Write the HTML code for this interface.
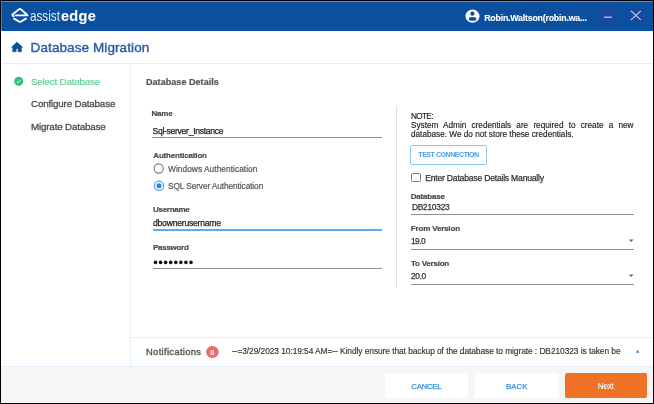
<!DOCTYPE html>
<html><head><meta charset="utf-8"><style>
html,body{margin:0;padding:0;}
body{width:654px;height:404px;position:relative;overflow:hidden;background:#000;font-family:'Liberation Sans', sans-serif;}
#root{position:absolute;left:0;top:0;width:654px;height:404px;filter:blur(0.35px);}
#win{position:absolute;left:1px;top:1px;width:652px;height:402px;background:#fff;}
.t{position:absolute;white-space:pre;font-family:'Liberation Sans', sans-serif;}
</style></head><body>
<div id="root"><div id="win"></div>
<div style="position:absolute;left:1px;top:1px;width:652px;height:30px;background:#0b4f9f"></div>
<div style="position:absolute;left:1px;top:1px;width:652px;height:1px;background:rgba(255,255,255,0.35)"></div>
<div style="position:absolute;left:1px;top:1px;width:1px;height:30px;background:rgba(255,255,255,0.25)"></div>
<div style="position:absolute;left:599.5px;top:9px;width:15.5px;height:13.5px;background:#1b479f;border-radius:1.5px"></div>
<div style="position:absolute;left:629px;top:8.7px;width:15.3px;height:13.8px;background:#1b479f;border-radius:1.5px"></div>
<div style="position:absolute;left:2px;top:63px;width:651px;height:1px;background:#e3eefa"></div>
<div style="position:absolute;left:130px;top:63px;width:1px;height:304px;background:#e3eefa"></div>
<div style="position:absolute;left:131px;top:337px;width:522px;height:1px;background:#e3eefa"></div>
<div style="position:absolute;left:1px;top:366px;width:652px;height:1px;background:#e3eefa"></div>
<div style="position:absolute;left:1px;top:367px;width:652px;height:35px;background:#f6f6f6"></div>
<div style="position:absolute;left:385px;top:373px;width:83px;height:25px;background:#fff;border-radius:2px"></div>
<div style="position:absolute;left:475px;top:373px;width:83px;height:25px;background:#fff;border-radius:2px"></div>
<div style="position:absolute;left:565px;top:373px;width:82px;height:25px;background:#f07226;border-radius:2px"></div>
<div style="position:absolute;left:152px;top:137px;width:230px;height:1px;background:#8f8f8f"></div>
<div style="position:absolute;left:153px;top:229px;width:229px;height:2px;background:#5caaf0"></div>
<div style="position:absolute;left:153px;top:268px;width:229px;height:1px;background:#8f8f8f"></div>
<div style="position:absolute;left:410.5px;top:214px;width:223.5px;height:1px;background:#8f8f8f"></div>
<div style="position:absolute;left:410.5px;top:249px;width:223.5px;height:1px;background:#8f8f8f"></div>
<div style="position:absolute;left:410.5px;top:284px;width:223.5px;height:1px;background:#8f8f8f"></div>
<div style="position:absolute;left:396px;top:106px;width:1px;height:181px;background:#e0e0e0"></div>
<div style="position:absolute;left:410px;top:144.5px;width:77px;height:20px;box-sizing:border-box;border:1.2px solid #8cc4f4;border-radius:2px"></div>
<div style="position:absolute;left:411px;top:173px;width:10px;height:9px;box-sizing:border-box;border:1.2px solid #777;border-radius:1.5px"></div>
<svg width="654" height="404" style="position:absolute;left:0;top:0">
<g fill="none" stroke="#fff" stroke-width="1.85" stroke-linecap="round" stroke-linejoin="round">
<path d="M13.6 16.3 L12.5 15.3 Q12.1 14.9 12.5 14.5 L18.8 9.4 Q19.9 8.6 21 9.4 L27.5 15.3 H15.9"/>
<path d="M14 18.6 L19.3 21.7 Q20 22.1 20.7 21.7 L26 18.6"/>
</g>
<ellipse cx="472.5" cy="16.2" rx="7" ry="6.6" fill="#fff"/>
<circle cx="472.4" cy="13.7" r="2.1" fill="#0b4f9f"/>
<ellipse cx="472.6" cy="18.9" rx="3.8" ry="1.9" fill="#0b4f9f"/>
<rect x="603.8" y="16.5" width="8" height="1.3" fill="#b8c6e6"/>
<path d="M631 10.8 L640.8 19.9 M640.8 10.8 L631 19.9" stroke="#c0cce8" stroke-width="1.15"/>
<path d="M17 42.2 L11.6 47.2 H12.8 V51.7 H16.1 V48.6 H18.1 V51.7 H21.3 V47.2 H22.5 Z" fill="#0d4fa3" stroke="#0d4fa3" stroke-width="0.7" stroke-linejoin="round"/>
<circle cx="18.7" cy="81.3" r="4.5" fill="#2ec27e"/>
<path d="M16.9 81.6 L18.2 82.7 L20.5 80.3" stroke="#fff" stroke-width="0.9" fill="none"/>
<circle cx="158.7" cy="168.5" r="4.6" fill="none" stroke="#7a7a7a" stroke-width="1.1"/>
<circle cx="159" cy="185.8" r="4.6" fill="none" stroke="#5aa8f2" stroke-width="1.3"/>
<circle cx="159" cy="185.8" r="2.5" fill="#1f88e8"/>
<path d="M628.8 239.6 H633.6 L631.2 242 Z" fill="#666"/>
<path d="M628.8 274.5 H633.6 L631.2 276.9 Z" fill="#666"/>
<ellipse cx="212.4" cy="352.1" rx="6.4" ry="6.0" fill="#ec6c6c"/>
<path d="M635.9 352.7 L637.6 349.7 L639.3 352.7 Z" fill="#3f7fd0"/>
<circle cx="155.50" cy="262.4" r="1.8" fill="#111"/>
<circle cx="160.57" cy="262.4" r="1.8" fill="#111"/>
<circle cx="165.64" cy="262.4" r="1.8" fill="#111"/>
<circle cx="170.71" cy="262.4" r="1.8" fill="#111"/>
<circle cx="175.78" cy="262.4" r="1.8" fill="#111"/>
<circle cx="180.85" cy="262.4" r="1.8" fill="#111"/>
<circle cx="185.92" cy="262.4" r="1.8" fill="#111"/>
<circle cx="190.99" cy="262.4" r="1.8" fill="#111"/>
</svg>
<span class="t" style="left:30.20px;top:7.50px;font-size:15px;line-height:15px;font-weight:400;color:#e4ecf7;letter-spacing:0.000px;transform:scaleX(0.7795);transform-origin:0px 0;">assist</span>
<span class="t" style="left:60.90px;top:8.50px;font-size:14.5px;line-height:14.5px;font-weight:700;color:#ffffff;letter-spacing:0.333px;-webkit-text-stroke:0.1px currentColor;">edge</span>
<span class="t" style="left:484.20px;top:13.60px;font-size:8.8px;line-height:8.8px;font-weight:700;color:#ffffff;letter-spacing:-0.208px;-webkit-text-stroke:0.1px currentColor;">Robin.Waltson(robin.wa...</span>
<span class="t" style="left:30.60px;top:41.00px;font-size:13.5px;line-height:13.5px;font-weight:400;color:#2a5ca6;letter-spacing:0.094px;-webkit-text-stroke:0.4px currentColor;">Database Migration</span>
<span class="t" style="left:31.00px;top:77.00px;font-size:9.8px;line-height:9.8px;font-weight:400;color:#5ccf9a;letter-spacing:-0.200px;-webkit-text-stroke:0.15px currentColor;">Select Database</span>
<span class="t" style="left:31.00px;top:99.20px;font-size:9.8px;line-height:9.8px;font-weight:400;color:#4d4d4d;letter-spacing:-0.165px;-webkit-text-stroke:0.3px currentColor;">Configure Database</span>
<span class="t" style="left:31.00px;top:121.60px;font-size:9.8px;line-height:9.8px;font-weight:400;color:#4d4d4d;letter-spacing:-0.173px;-webkit-text-stroke:0.3px currentColor;">Migrate Database</span>
<span class="t" style="left:146.00px;top:78.00px;font-size:9.0px;line-height:9.0px;font-weight:700;color:#555555;letter-spacing:0.053px;-webkit-text-stroke:0.2px currentColor;">Database Details</span>
<span class="t" style="left:151.50px;top:109.80px;font-size:8.0px;line-height:8.0px;font-weight:700;color:#4a4a4a;letter-spacing:-0.200px;-webkit-text-stroke:0.2px currentColor;">Name</span>
<span class="t" style="left:152.50px;top:126.70px;font-size:8.6px;line-height:8.6px;font-weight:400;color:#222222;letter-spacing:-0.300px;-webkit-text-stroke:0.25px currentColor;">Sql-server_Instance</span>
<span class="t" style="left:153.30px;top:152.00px;font-size:8.0px;line-height:8.0px;font-weight:700;color:#4a4a4a;letter-spacing:-0.177px;-webkit-text-stroke:0.2px currentColor;">Authentication</span>
<span class="t" style="left:168.00px;top:164.70px;font-size:8.3px;line-height:8.3px;font-weight:400;color:#555555;letter-spacing:0.062px;-webkit-text-stroke:0.2px currentColor;">Windows Authentication</span>
<span class="t" style="left:168.00px;top:182.00px;font-size:8.3px;line-height:8.3px;font-weight:400;color:#555555;letter-spacing:-0.092px;-webkit-text-stroke:0.2px currentColor;">SQL Server Authentication</span>
<span class="t" style="left:153.00px;top:205.50px;font-size:8.0px;line-height:8.0px;font-weight:700;color:#4a4a4a;letter-spacing:-0.271px;-webkit-text-stroke:0.2px currentColor;">Username</span>
<span class="t" style="left:153.00px;top:218.70px;font-size:8.6px;line-height:8.6px;font-weight:400;color:#222222;letter-spacing:-0.221px;-webkit-text-stroke:0.25px currentColor;">dbownerusername</span>
<span class="t" style="left:153.00px;top:244.00px;font-size:8.0px;line-height:8.0px;font-weight:700;color:#4a4a4a;letter-spacing:-0.286px;-webkit-text-stroke:0.2px currentColor;">Password</span>
<span class="t" style="left:410.90px;top:113.30px;font-size:8.2px;line-height:8.2px;font-weight:400;color:#222222;letter-spacing:-0.625px;-webkit-text-stroke:0.15px currentColor;">NOTE:</span>
<span class="t" style="left:411.00px;top:131.30px;font-size:8.2px;line-height:8.2px;font-weight:400;color:#222222;letter-spacing:0.007px;-webkit-text-stroke:0.15px currentColor;">database. We do not store these credentials.</span>
<span class="t" style="left:418.30px;top:151.00px;font-size:7.0px;line-height:7.0px;font-weight:700;color:#4a9ce8;letter-spacing:-0.436px;">TEST CONNECTION</span>
<span class="t" style="left:425.20px;top:173.70px;font-size:8.6px;line-height:8.6px;font-weight:400;color:#333333;letter-spacing:-0.210px;-webkit-text-stroke:0.25px currentColor;">Enter Database Details Manually</span>
<span class="t" style="left:410.80px;top:192.80px;font-size:8.0px;line-height:8.0px;font-weight:700;color:#4a4a4a;letter-spacing:-0.214px;-webkit-text-stroke:0.2px currentColor;">Database</span>
<span class="t" style="left:411.90px;top:203.30px;font-size:8.4px;line-height:8.4px;font-weight:400;color:#333333;letter-spacing:-0.243px;-webkit-text-stroke:0.25px currentColor;">DB210323</span>
<span class="t" style="left:410.80px;top:225.00px;font-size:8.0px;line-height:8.0px;font-weight:700;color:#4a4a4a;letter-spacing:-0.173px;-webkit-text-stroke:0.2px currentColor;">From Version</span>
<span class="t" style="left:411.00px;top:237.10px;font-size:8.4px;line-height:8.4px;font-weight:400;color:#333333;letter-spacing:-0.567px;-webkit-text-stroke:0.25px currentColor;">19.0</span>
<span class="t" style="left:411.00px;top:260.00px;font-size:8.0px;line-height:8.0px;font-weight:700;color:#4a4a4a;letter-spacing:-0.233px;-webkit-text-stroke:0.2px currentColor;">To Version</span>
<span class="t" style="left:411.00px;top:272.10px;font-size:8.4px;line-height:8.4px;font-weight:400;color:#333333;letter-spacing:-0.400px;-webkit-text-stroke:0.25px currentColor;">20.0</span>
<span class="t" style="left:146.00px;top:347.00px;font-size:9.4px;line-height:9.4px;font-weight:400;color:#555555;letter-spacing:0.333px;-webkit-text-stroke:0.35px currentColor;">Notifications</span>
<span class="t" style="left:232.00px;top:347.00px;font-size:8.4px;line-height:8.4px;font-weight:400;color:#333333;letter-spacing:-0.066px;-webkit-text-stroke:0.15px currentColor;">--=3/29/2023 10:19:54 AM=-- Kindly ensure that backup of the database to migrate : DB210323 is taken be</span>
<span class="t" style="left:411.30px;top:383.00px;font-size:7.8px;line-height:7.8px;font-weight:400;color:#3a8ee0;letter-spacing:-0.280px;-webkit-text-stroke:0.25px currentColor;">CANCEL</span>
<span class="t" style="left:505.90px;top:383.00px;font-size:7.8px;line-height:7.8px;font-weight:400;color:#3a8ee0;letter-spacing:0.133px;-webkit-text-stroke:0.25px currentColor;">BACK</span>
<span class="t" style="left:597.80px;top:382.60px;font-size:8.2px;line-height:8.2px;font-weight:400;color:#ffffff;letter-spacing:-0.267px;-webkit-text-stroke:0.1px currentColor;">Next</span>
<div class="t" style="left:411px;top:122.3px;width:222.5px;font-size:8.2px;line-height:8.2px;color:#222;text-align:justify;text-align-last:justify;white-space:normal;-webkit-text-stroke:0.15px currentColor;">System Admin credentials are required to create a new</div>
<span class="t" style="left:210.3px;top:349px;font-size:7.5px;line-height:7.5px;font-weight:400;color:#fff;-webkit-text-stroke:0.2px #fff">8</span>
</div></body></html>
